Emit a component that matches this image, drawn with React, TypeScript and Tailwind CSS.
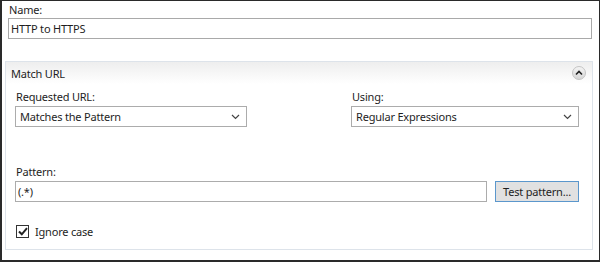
import React from "react";

function Chevron() {
  return (
    <svg width="9" height="6" viewBox="0 0 9 6" className="shrink-0">
      <path d="M1 1 L4.5 4.5 L8 1" fill="none" stroke="#444" strokeWidth="1.2" />
    </svg>
  );
}

function Select({ value, className }: { value: string; className: string }) {
  return (
    <div
      className={`flex h-[21px] items-center justify-between border border-[#acacac] bg-white pl-[4px] pr-[6px] ${className}`}
    >
      <span>{value}</span>
      <Chevron />
    </div>
  );
}

export default function App() {
  return (
    <div
      className="h-[262px] w-[600px] overflow-hidden border border-l-2 border-b-2 border-[#2a2a2a] bg-white text-[11px] leading-[15px] tracking-[-0.2px] text-[#1e1e1e]"
      style={{ fontFamily: '"Noto Sans", sans-serif' }}
    >
      <div className="pl-[6px] pt-[1px]">
        <div className="pl-[1px]">Name:</div>
        <div className="mt-[1px] flex h-[21px] w-[584px] items-center border border-[#a9a9a9] bg-white pl-[2px]">
          HTTP to HTTPS
        </div>
      </div>

      <div className="ml-[3px] mt-[22px] w-[588px] border border-[#dde3ea]">
        <div className="flex h-[22px] items-center justify-between bg-gradient-to-b from-[#eeeeee] to-white pl-[5px] pr-[6px]">
          <span>Match URL</span>
          <div className="flex h-[14px] w-[14px] items-center justify-center rounded-full border border-[#c4c4c4] bg-gradient-to-b from-[#f4f4f4] to-[#d6d6d6]">
            <svg width="8" height="6" viewBox="0 0 8 6">
              <path d="M1 4.5 L4 1.5 L7 4.5" fill="none" stroke="#222" strokeWidth="1.6" />
            </svg>
          </div>
        </div>

        <div className="pb-[10px] pl-[9px] pr-[13px] pt-[5px]">
          <div className="flex justify-between">
            <div>
              <div className="pl-[1px]">Requested URL:</div>
              <Select value="Matches the Pattern" className="mt-[2px] w-[232px]" />
            </div>
            <div>
              <div className="pl-[1px]">Using:</div>
              <Select value="Regular Expressions" className="mt-[2px] w-[228px]" />
            </div>
          </div>

          <div className="mt-[37px] pl-[1px]">Pattern:</div>
          <div className="mt-[2px] flex gap-[8px]">
            <div className="flex h-[21px] w-[472px] items-center border border-[#acacac] bg-white pl-[2px]">
              (.*)
            </div>
            <div className="flex h-[21px] w-[84px] items-center justify-center border border-[#5b97cc] bg-[#e1e1e1]">
              Test pattern...
            </div>
          </div>

          <div className="mt-[22px] flex items-center gap-[6px] pl-[1px]">
            <div className="flex h-[13px] w-[13px] items-center justify-center border border-[#333] bg-white">
              <svg width="10" height="9" viewBox="0 0 10 9">
                <path d="M1 4.5 L3.8 7.3 L9 1.2" fill="none" stroke="#222" strokeWidth="2" />
              </svg>
            </div>
            <span>Ignore case</span>
          </div>
        </div>
      </div>
    </div>
  );
}
